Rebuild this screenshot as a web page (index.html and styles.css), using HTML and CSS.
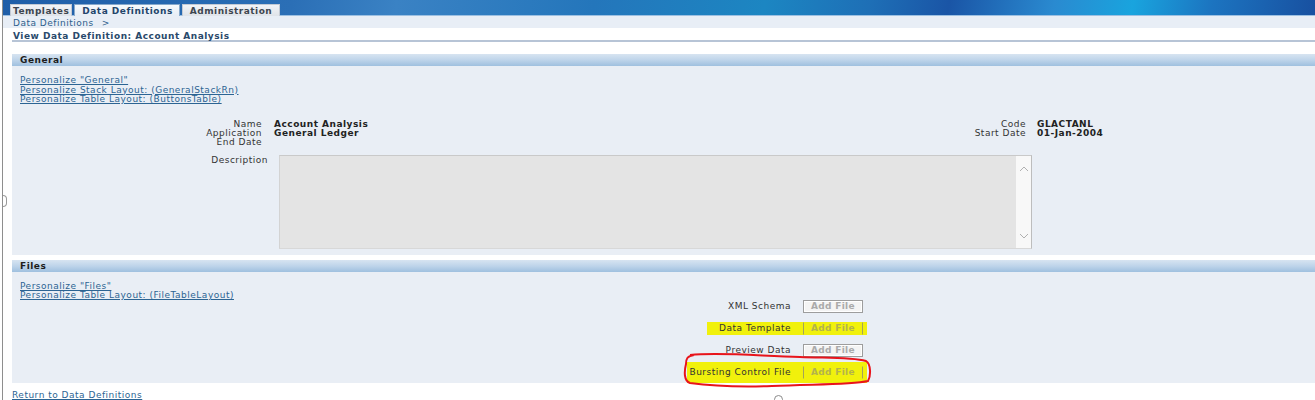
FILE: index.html
```html
<!DOCTYPE html>
<html>
<head>
<meta charset="utf-8">
<title>View Data Definition: Account Analysis</title>
<link rel="stylesheet" href="styles.css">
</head>
<body>
<div class="page">
  <div class="banner">
    <div class="tabs">
      <span class="tab t1">Templates</span>
      <span class="tab t2 active">Data Definitions</span>
      <span class="tab t3">Administration</span>
    </div>
  </div>
  <div class="crumbs"><a class="crumb-link">Data Definitions</a><span class="sep">&gt;</span></div>
  <div class="title">View Data Definition: Account Analysis</div>

  <section class="sec general">
    <div class="sec-head">General</div>
    <div class="sec-body">
      <div class="links">
        <a class="plink">Personalize "General"</a>
        <a class="plink">Personalize Stack Layout: (GeneralStackRn)</a>
        <a class="plink">Personalize Table Layout: (ButtonsTable)</a>
      </div>
      <div class="info">
        <span class="k">Name</span><span class="v">Account Analysis</span>
        <span class="k">Code</span><span class="v v2">GLACTANL</span>
        <span class="k">Application</span><span class="v">General Ledger</span>
        <span class="k">Start Date</span><span class="v v2">01-Jan-2004</span>
        <span class="k">End Date</span><span class="v"></span>
        <span class="k"></span><span class="v v2"></span>
      </div>
      <div class="desc">
        <span class="k">Description</span>
        <div class="textarea">
          <div class="ta-fill"></div>
          <div class="ta-scroll">
            <svg class="chev" width="10" height="6" viewBox="0 0 10 6"><path d="M1 5 L5 1 L9 5" fill="none" stroke="#b0b0b0" stroke-width="1"/></svg>
            <svg class="chev" width="10" height="6" viewBox="0 0 10 6"><path d="M1 1 L5 5 L9 1" fill="none" stroke="#b0b0b0" stroke-width="1"/></svg>
          </div>
        </div>
      </div>
    </div>
  </section>

  <section class="sec files">
    <div class="sec-head">Files</div>
    <div class="sec-body">
      <div class="links">
        <a class="plink">Personalize "Files"</a>
        <a class="plink">Personalize Table Layout: (FileTableLayout)</a>
      </div>
      <div class="frows">
        <div class="pair"><span class="flabel">XML Schema</span><span class="btn">Add File</span></div>
        <div class="pair hl"><span class="flabel">Data Template</span><span class="btn">Add File</span></div>
        <div class="pair"><span class="flabel">Preview Data</span><span class="btn">Add File</span></div>
        <div class="pair hl big"><span class="flabel">Bursting Control File</span><span class="btn">Add File</span></div>
      </div>
    </div>
  </section>

  <div class="foot"><a class="plink">Return to Data Definitions</a></div>
</div>
<span class="bump"></span>
<span class="cursor-ring"></span>
<svg class="annot" width="1315" height="400" viewBox="0 0 1315 400">
  <path d="M690 355 C720 352 760 356 800 357 C830 358 852 357 866 361 C871 364 871 376 868 381 C850 385 812 384 772 386 C742 387 712 386 690 383 C684 381 684 372 686 364 C686 359 687 356 694 355" fill="none" stroke="#e8141b" stroke-width="2"/>
</svg>
</body>
</html>
```
FILE: styles.css
```css
html, body {
  margin: 0;
  padding: 0;
}
body {
  width: 1315px;
  height: 400px;
  overflow: hidden;
  background: #ffffff;
  font-family: "DejaVu Sans", "Liberation Sans", sans-serif;
  font-size: 9px;
  letter-spacing: 0.5px;
  color: #333333;
}
.page {
  margin-left: 2px;
  border-left: 1px solid #8e8e8e;
  height: 400px;
}

/* banner and tabs */
.banner {
  height: 16px;
  display: flex;
  align-items: flex-end;
  background:
    linear-gradient(180deg, rgba(255,255,255,0) 0, rgba(255,255,255,0) 15px, #9cc0e2 15px),
    linear-gradient(100deg, #1f5ea8 0%, #2b6fb6 22%, #3a82c4 30%, #2476bb 45%, #1c86c2 58%, #1e6fb6 66%, #1a55a6 72%, #2a8ad0 80%, #19a4de 86%, #1c74c0 92%, #1850a0 100%);
}
.tabs {
  display: flex;
  gap: 2px;
  padding-left: 7px;
}
.tab {
  height: 12px;
  box-sizing: border-box;
  line-height: 12px;
  font-weight: bold;
  font-size: 9px;
  color: #3d4650;
  background: linear-gradient(180deg, #f2f4f7 0%, #dfe3e9 100%);
  border: 1px solid #c3cad4;
  border-bottom: none;
}
.t1 {
  padding: 0 2px 0 2px;
}
.t2 {
  padding: 0 6px 0 7px;
}
.t3 {
  padding: 0 7px 0 7px;
}
.tab.active {
  color: #23456b;
  background: linear-gradient(180deg, #f7fafd 0%, #e6edf5 100%);
  border-color: #86a9cc;
}

/* crumbs + title */
.crumbs {
  height: 12px;
  line-height: 15px;
  padding-left: 10px;
  background: #e8eef6;
  color: #2e5f8d;
  overflow: hidden;
}
.crumb-link {
  color: #2e5f8d;
}
.sep {
  margin-left: 8px;
}
.title {
  height: 12px;
  line-height: 16px;
  margin: 0 0 12px 9px;
  padding-left: 1px;
  border-bottom: 2px solid #b7c4d6;
  font-weight: bold;
  color: #29496b;
}

/* sections */
.sec {
  margin-left: 9px;
  margin-bottom: 5px;
}
.sec-head {
  height: 12px;
  line-height: 13px;
  padding-left: 8px;
  font-weight: bold;
  color: #1c1c1c;
  background: linear-gradient(180deg, #d7e4f1 0%, #bed4ea 50%, #9fc0df 100%);
}
.sec-body {
  background: #e9eef5;
}
.general .sec-body {
  padding: 10px 0 6px 0;
}
.files .sec-body {
  padding: 10px 0 4px 0;
}
.links {
  display: flex;
  flex-direction: column;
  align-items: flex-start;
  padding-left: 8px;
  line-height: 9.5px;
}
.plink {
  color: #2c6493;
  text-decoration: underline;
}

/* general info grid */
.info {
  display: grid;
  grid-template-columns: 250px 692px 72px auto;
  margin-top: 15px;
  line-height: 9px;
}
.info .k {
  text-align: right;
  color: #333333;
}
.info .v {
  padding-left: 12px;
  font-weight: bold;
  color: #222222;
}
.info .v2 {
  padding-left: 11px;
}
.desc {
  display: grid;
  grid-template-columns: 256px 753px;
  column-gap: 11px;
  margin-top: 8px;
  line-height: 9px;
}
.desc .k {
  text-align: right;
  padding-top: 1px;
}
.textarea {
  display: flex;
  height: 94px;
  box-sizing: border-box;
  border-top: 1px solid #c9c9c9;
  border-left: 1px solid #d3d3d3;
  border-right: 1px solid #bdbdbd;
  border-bottom: 1px solid #d8d8d8;
}
.ta-fill {
  flex: 1;
  background: #e4e4e4;
}
.ta-scroll {
  width: 15px;
  background: #f8f8f8;
  display: flex;
  flex-direction: column;
  justify-content: space-between;
  align-items: center;
  padding: 10px 0 9px;
}

/* files rows */
.frows {
  width: 851px;
  display: flex;
  flex-direction: column;
  align-items: flex-end;
  gap: 9px;
  margin-top: -1px;
}
.pair {
  display: flex;
  align-items: center;
  gap: 12px;
  height: 13px;
}
.flabel {
  color: #333333;
}
.btn {
  width: 60px;
  height: 13px;
  box-sizing: border-box;
  border: 1px solid #9d9d9d;
  background: #f4f4f4;
  box-shadow: inset 0 0 0 1px #ffffff;
  color: #aaaaaa;
  font-weight: bold;
  text-align: center;
  line-height: 11px;
  letter-spacing: 0.3px;
}
.pair.hl {
  background: #f1f10c;
  padding: 0 4px 0 12px;
  margin-right: -4px;
}
.pair.hl .btn {
  background: transparent;
  box-shadow: none;
  border-top-color: transparent;
  border-bottom-color: transparent;
  border-left-color: #a3a35a;
  border-right-color: #a3a35a;
  color: #b3b34c;
}
.pair.hl.big {
  height: 21px;
  padding: 4px 4px 4px 2px;
  margin: -4px -4px -4px 0;
  box-sizing: border-box;
}

.foot {
  height: 11px;
  margin-top: 7px;
  padding-left: 9px;
  line-height: 11px;
}

/* overlay details */
.annot {
  position: absolute;
  left: 0;
  top: 0;
  pointer-events: none;
}
.bump {
  position: absolute;
  left: 3px;
  top: 195px;
  width: 3px;
  height: 10px;
  border: 1px solid #9a9a9a;
  border-left: none;
  border-radius: 0 5px 5px 0;
}
.cursor-ring {
  position: absolute;
  left: 774px;
  top: 395px;
  width: 7px;
  height: 7px;
  border: 1.5px solid #8a8a8a;
  border-radius: 50%;
}
```
